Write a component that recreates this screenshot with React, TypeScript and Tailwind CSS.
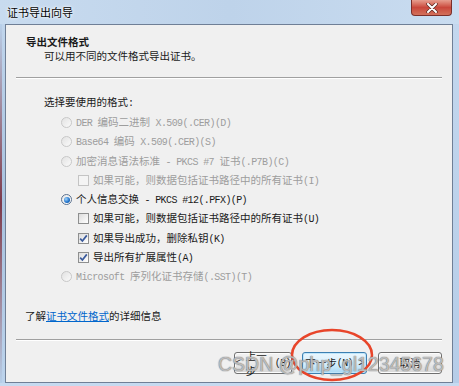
import React from 'react';

type Row = { kind: 'radio' | 'check'; text: string; disabled?: boolean; checked?: boolean };

const rows: Row[] = [
  { kind: 'radio', text: 'DER 编码二进制 X.509(.CER)(D)', disabled: true },
  { kind: 'radio', text: 'Base64 编码 X.509(.CER)(S)', disabled: true },
  { kind: 'radio', text: '加密消息语法标准 - PKCS #7 证书(.P7B)(C)', disabled: true },
  { kind: 'check', text: '如果可能，则数据包括证书路径中的所有证书(I)', disabled: true },
  { kind: 'radio', text: '个人信息交换 - PKCS #12(.PFX)(P)', checked: true },
  { kind: 'check', text: '如果可能，则数据包括证书路径中的所有证书(U)' },
  { kind: 'check', text: '如果导出成功，删除私钥(K)', checked: true },
  { kind: 'check', text: '导出所有扩展属性(A)', checked: true },
  { kind: 'radio', text: 'Microsoft 序列化证书存储(.SST)(T)', disabled: true },
];

// latin runs are narrower than the CJK glyphs, like SimSun's half-width letters
function Mixed({ text }: { text: string }) {
  const parts = text.split(/([\x20-\x7e]+)/).filter(Boolean);
  return (
    <>
      {parts.map((p, i) =>
        /^[\x20-\x7e]+$/.test(p) ? (
          <span key={i} className="font-['Liberation_Mono',monospace] text-[10px] tracking-[-0.6px] whitespace-pre">
            {p}
          </span>
        ) : (
          <span key={i}>{p}</span>
        )
      )}
    </>
  );
}

function Radio({ disabled, checked }: { disabled?: boolean; checked?: boolean }) {
  if (disabled) {
    return <div className="w-[11px] h-[11px] rounded-full border border-[#c8c8c8] bg-gradient-to-br from-[#e2e2e2] to-[#fafafa] shrink-0" />;
  }
  return (
    <div className="w-[11px] h-[11px] rounded-full border border-[#5b7290] bg-gradient-to-br from-[#e8e8e8] to-white flex items-center justify-center shrink-0">
      {checked && <div className="w-[6px] h-[6px] rounded-full bg-[radial-gradient(circle_at_35%_35%,#9fd4ff,#1c6fc7_60%,#0d4d95)]" />}
    </div>
  );
}

function Check({ disabled, checked }: { disabled?: boolean; checked?: boolean }) {
  return (
    <div
      className={
        disabled
          ? 'w-[11px] h-[11px] border border-[#c4c4c4] bg-[#f4f4f4] shrink-0'
          : 'w-[11px] h-[11px] border border-[#8e8f8f] bg-gradient-to-br from-[#dcdcdc] to-white shrink-0 flex items-center justify-center'
      }
    >
      {checked && (
        <svg width="9" height="9" viewBox="0 0 9 9">
          <path d="M1.2 4.6 L3.4 7 L7.8 1.4" fill="none" stroke="#3a5a9c" strokeWidth="1.7" />
        </svg>
      )}
    </div>
  );
}

function Button({ label, w, focused }: { label: string; w: string; focused?: boolean }) {
  return (
    <div
      className={
        focused
          ? `${w} h-[22px] rounded-[3px] border border-[#3c7fb1] bg-gradient-to-b from-[#eaf6fd] via-[#d9f0fc] to-[#a7d9f5] shadow-[inset_0_0_0_1px_#bfe6fb] flex items-center justify-center`
          : `${w} h-[22px] rounded-[3px] border border-[#707070] bg-gradient-to-b from-[#f2f2f2] via-[#ebebeb] to-[#d6d6d6] shadow-[inset_0_0_0_1px_#fcfcfc] flex items-center justify-center`
      }
    >
      <Mixed text={label} />
    </div>
  );
}

export default function App() {
  return (
    <div className="relative w-[459px] h-[386px] overflow-hidden flex flex-col bg-gradient-to-b from-[#c3d7ee] via-[#b7cfe9] to-[#c6daf0] font-['Noto_Sans_CJK_SC','Noto_Sans',sans-serif] text-[10.5px] text-[#1a1a1a]">
      {/* title bar */}
      <div className="h-[24px] flex items-start justify-between pl-[7px] pr-[7px] bg-gradient-to-r from-[#c8dbef] via-[#bed3ea] to-[#c9dcf0]">
        <div className="h-[24px] flex items-center text-[11px] text-black [text-shadow:0_0_4px_#ffffff,0_0_2px_#ffffff]">证书导出向导</div>
        <div className="w-[41px] h-[16px] rounded-b-[4px] border border-t-0 border-[#7b2f2a] bg-gradient-to-b from-[#e69e8f] via-[#c9473b] to-[#d2705b] flex items-center justify-center">
          <svg width="12" height="10" viewBox="0 0 12 10">
            <path d="M2 1 L10 9 M10 1 L2 9" stroke="#5a2a22" strokeWidth="3.4" strokeLinecap="round" />
            <path d="M2 1 L10 9 M10 1 L2 9" stroke="#ffffff" strokeWidth="2" strokeLinecap="round" />
          </svg>
        </div>
      </div>

      <div className="flex flex-1">
        <div className="w-[5px] flex">
          <div className="w-[2px] bg-gradient-to-b from-[#b8d0ea] via-[#7b3a4c] to-[#b6cfe9]" />
          <div className="flex-1 bg-gradient-to-b from-[#c0d5ec] via-[#a9c2de] to-[#bcd3ec]" />
        </div>
        {/* client area */}
        <div className="flex-1 flex flex-col border border-[#6f7f96] bg-[#f0f0f0]">
          <div className="pl-[20px] pt-[10px]">
            <div className="h-[14px] leading-[14px] font-bold">导出文件格式</div>
            <div className="h-[14px] leading-[14px] pl-[18px]">可以用不同的文件格式导出证书。</div>
          </div>
          <div className="mt-[14px] mx-[10px] border-t border-[#a0a0a0] border-b border-b-white" />

          <div className="mt-[16px] pl-[38px] h-[14px] leading-[14px]">
            <Mixed text="选择要使用的格式:" />
          </div>

          <div className="mt-[4px] flex flex-col">
            {rows.map((r, i) => (
              <div
                key={i}
                className={`h-[19.25px] flex items-center gap-[4px] ${r.kind === 'check' ? 'pl-[72px]' : 'pl-[55px]'} ${r.disabled ? 'text-[#9d9d9d]' : 'text-[#1a1a1a]'}`}
              >
                {r.kind === 'radio' ? <Radio disabled={r.disabled} checked={r.checked} /> : <Check disabled={r.disabled} checked={r.checked} />}
                <span className="whitespace-nowrap">
                  <Mixed text={r.text} />
                </span>
              </div>
            ))}
          </div>

          <div className="mt-[23px] pl-[19px] h-[14px] leading-[14px]">
            了解<span className="text-[#0066cc] underline">证书文件格式</span>的详细信息
          </div>

          <div className="mt-[16px] mx-[10px] border-t border-[#a0a0a0] border-b border-b-white" />

          <div className="mt-[11px] flex justify-end pr-[10px]">
            <Button label="< 上一步(B)" w="w-[58px]" />
            <div className="w-[10px]" />
            <Button label="下一步(N) >" w="w-[65px]" focused />
            <div className="w-[11px]" />
            <Button label="取消" w="w-[64px]" />
          </div>
        </div>
        <div className="w-[6px] bg-gradient-to-b from-[#c3d7ee] to-[#b6cde8]" />
      </div>
      <div className="h-[3px]" />

      {/* annotation + watermark drawn over the dialog */}
      <svg className="absolute left-0 top-0 pointer-events-none" width="459" height="386">
        <ellipse cx="332" cy="355" rx="40" ry="25" fill="none" stroke="#e8452a" strokeWidth="2.5" />
      </svg>
      <div className="absolute left-[218px] top-[352px] text-[19.5px] leading-[24px] font-['Liberation_Sans',sans-serif] text-[rgba(255,255,255,0.5)] [text-shadow:0_0_1px_#777777,0_0_1px_#777777] whitespace-nowrap">
        CSDN @php_gl12345678
      </div>
    </div>
  );
}
